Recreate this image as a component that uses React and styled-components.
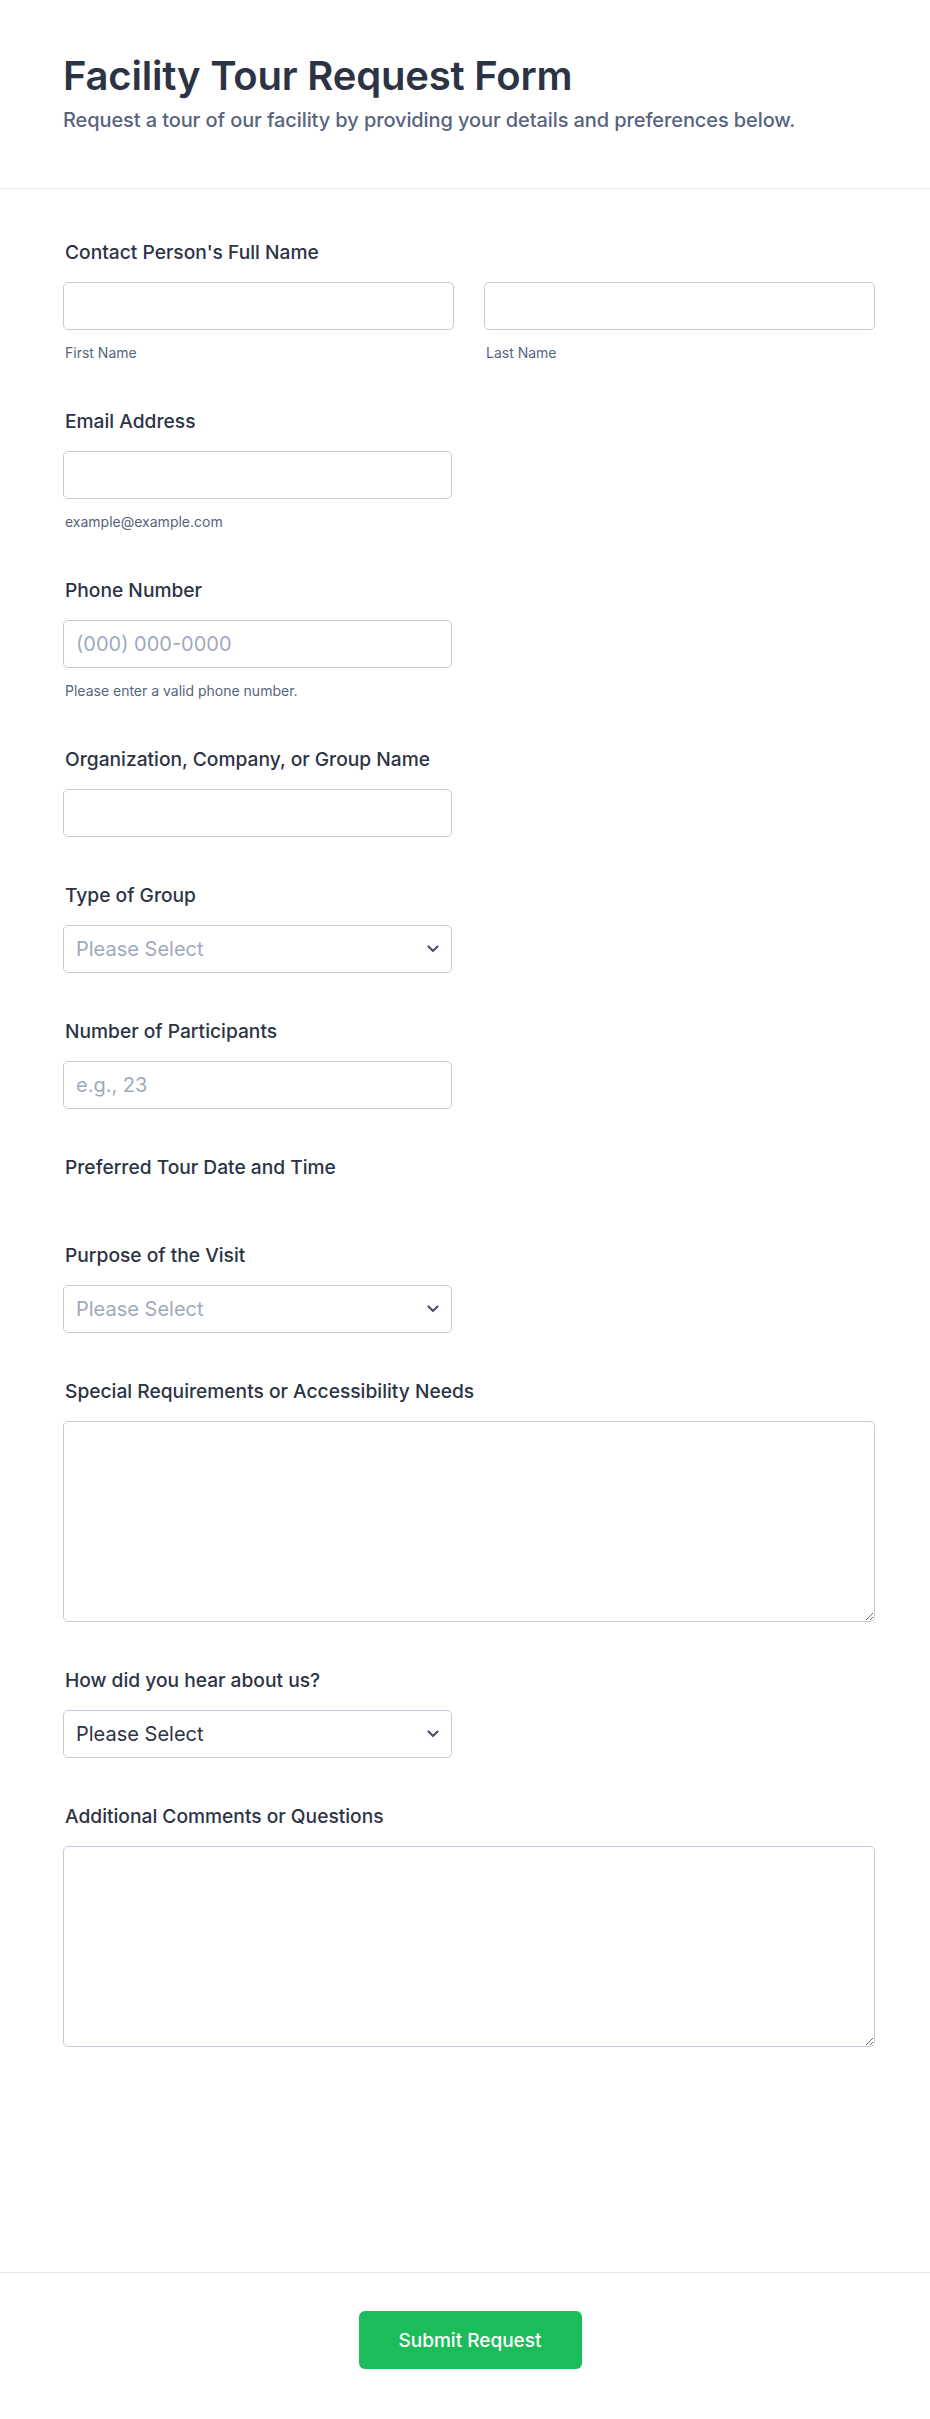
import styled, { createGlobalStyle } from "styled-components";

const GlobalStyle = createGlobalStyle`
  * { box-sizing: border-box; }
  body {
    margin: 0;
    background: #ffffff;
    font-family: Inter, "Noto Sans", sans-serif;
    color: #2c3345;
  }
`;

const fields = [
  { type: "name", label: "Contact Person's Full Name" },
  { type: "text", label: "Email Address", sub: "example@example.com" },
  { type: "text", label: "Phone Number", placeholder: "(000) 000-0000", sub: "Please enter a valid phone number." },
  { type: "text", label: "Organization, Company, or Group Name" },
  { type: "select", label: "Type of Group" },
  { type: "text", label: "Number of Participants", placeholder: "e.g., 23" },
  { type: "empty", label: "Preferred Tour Date and Time" },
  { type: "select", label: "Purpose of the Visit" },
  { type: "textarea", label: "Special Requirements or Accessibility Needs" },
  { type: "select", label: "How did you hear about us?", filled: true },
  { type: "textarea", label: "Additional Comments or Questions" },
];

const Chevron = () => (
  <ChevronIcon width="12" height="8" viewBox="0 0 12 8">
    <path d="M1.5 1.5 L6 6 L10.5 1.5" fill="none" stroke="#4b5468" strokeWidth="2.2" strokeLinecap="round" strokeLinejoin="round" />
  </ChevronIcon>
);

const Field = ({ field }) => {
  const { type, label, placeholder, sub, filled } = field;
  return (
    <FieldBox>
      <Label>{label}</Label>
      {type === "name" && (
        <NameRow>
          <div>
            <Input type="text" />
            <SubLabel>First Name</SubLabel>
          </div>
          <div>
            <Input type="text" />
            <SubLabel>Last Name</SubLabel>
          </div>
        </NameRow>
      )}
      {type === "text" && (
        <Half>
          <Input type="text" placeholder={placeholder} />
          {sub && <SubLabel>{sub}</SubLabel>}
        </Half>
      )}
      {type === "select" && (
        <Half>
          <SelectWrap>
            <Select $filled={filled} defaultValue="">
              <option value="">Please Select</option>
            </Select>
            <Chevron />
          </SelectWrap>
        </Half>
      )}
      {type === "textarea" && <TextArea />}
      {type === "empty" && <EmptyControl />}
    </FieldBox>
  );
};

const App = () => {
  return (
    <>
      <GlobalStyle />
      <Page>
        <Header>
          <Title>Facility Tour Request Form</Title>
          <Subtitle>Request a tour of our facility by providing your details and preferences below.</Subtitle>
        </Header>
        <Body>
          {fields.map((f) => (
            <Field key={f.label} field={f} />
          ))}
        </Body>
        <Footer>
          <SubmitButton type="button">Submit Request</SubmitButton>
        </Footer>
      </Page>
    </>
  );
};

const Page = styled.div`
  width: 930px;
  min-height: 2419px;
  display: flex;
  flex-direction: column;
`;

const Header = styled.header`
  padding: 52px 55px 54px 63px;
  border-bottom: 1px solid #e2e5ec;
`;

const Title = styled.h1`
  margin: 0;
  font-size: 40px;
  line-height: 48px;
  font-weight: 600;
  letter-spacing: -0.2px;
  color: #2c3345;
`;

const Subtitle = styled.p`
  margin: 6px 0 0;
  font-size: 20px;
  line-height: 28px;
  font-weight: 500;
  letter-spacing: -0.1px;
  color: #57647e;
`;

const Body = styled.main`
  flex: 1;
  padding: 51px 55px 164px 63px;
`;

const FieldBox = styled.div`
  display: flex;
  flex-direction: column;
  gap: 18px;
  padding-bottom: 46px;
`;

const Label = styled.div`
  font-size: 19.2px;
  line-height: 24px;
  font-weight: 500;
  color: #2c3345;
  padding-left: 2px;
`;

const EmptyControl = styled.div`
  height: 0;
`;

const NameRow = styled.div`
  display: grid;
  grid-template-columns: 1fr 1fr;
  column-gap: 30px;
`;

const Half = styled.div`
  width: 389px;
`;

const Input = styled.input`
  display: block;
  width: 100%;
  height: 48px;
  padding: 0 12px;
  border: 1px solid #c3cad8;
  border-radius: 5px;
  background: #fff;
  font-family: Inter, "Noto Sans", sans-serif;
  font-size: 20px;
  color: #2c3345;
  outline: none;
  &::placeholder {
    color: #a0a9bd;
  }
`;

const SelectWrap = styled.div`
  position: relative;
`;

const Select = styled.select`
  display: block;
  width: 100%;
  height: 48px;
  padding: 0 40px 0 12px;
  border: 1px solid #c3cad8;
  border-radius: 5px;
  background: #fff;
  appearance: none;
  font-family: Inter, "Noto Sans", sans-serif;
  font-size: 20px;
  color: ${(p) => (p.$filled ? "#2c3345" : "#a0a9bd")};
  outline: none;
`;

const ChevronIcon = styled.svg`
  position: absolute;
  right: 13px;
  top: 50%;
  transform: translateY(-50%);
  pointer-events: none;
`;

const TextArea = styled.textarea`
  display: block;
  width: 100%;
  height: 201px;
  padding: 12px;
  border: 1px solid #c3cad8;
  border-radius: 5px;
  font-family: Inter, "Noto Sans", sans-serif;
  font-size: 20px;
  color: #2c3345;
  resize: vertical;
  outline: none;
`;

const SubLabel = styled.div`
  margin-top: 13px;
  padding-left: 2px;
  font-size: 14px;
  line-height: 20px;
  color: #57647e;
`;

const Footer = styled.footer`
  border-top: 1px solid #e7e8ee;
  padding: 38px 0 50px 10px;
  display: flex;
  justify-content: center;
`;

const SubmitButton = styled.button`
  width: 223px;
  height: 58px;
  border: none;
  border-radius: 6px;
  background: #1bbd5a;
  color: #fff;
  font-family: Inter, "Noto Sans", sans-serif;
  font-size: 19px;
  font-weight: 500;
  cursor: pointer;
`;

export default App;
